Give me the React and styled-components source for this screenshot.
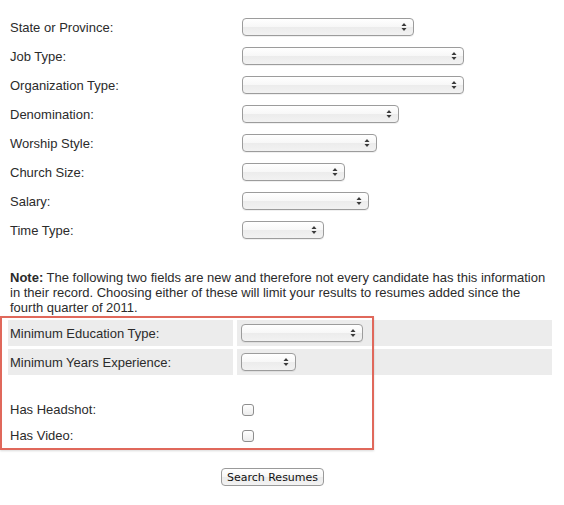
import styled, { createGlobalStyle } from "styled-components";

const GlobalStyle = createGlobalStyle`
    body{
        margin: 0;
        background: #ffffff;
        font-family: "Liberation Sans", Arial, Helvetica, sans-serif;
        font-size: 13px;
        color: #2b2b2b;
    }
`

const topFields = [
    { label: "State or Province:", width: 172 },
    { label: "Job Type:", width: 222 },
    { label: "Organization Type:", width: 222 },
    { label: "Denomination:", width: 157 },
    { label: "Worship Style:", width: 135 },
    { label: "Church Size:", width: 103 },
    { label: "Salary:", width: 127 },
    { label: "Time Type:", width: 82 },
]

function Select({ width }) {
    return (
        <SelectBox $width={width}>
            <Arrows width="6" height="10" viewBox="0 0 6 10">
                <path d="M3 1 L5.5 4 L0.5 4 Z" fill="#3a3a3a" />
                <path d="M3 9 L5.5 6 L0.5 6 Z" fill="#3a3a3a" />
            </Arrows>
        </SelectBox>
    )
}

export default function App() {
    return (
        <Page>
            <GlobalStyle />
            <Rows>
                {topFields.map((f) => (
                    <Row key={f.label}>
                        <Label>{f.label}</Label>
                        <Field>
                            <Select width={f.width} />
                        </Field>
                    </Row>
                ))}
            </Rows>

            <Note>
                <b>Note:</b> The following two fields are new and therefore not every candidate has this information
                <br />
                in their record. Choosing either of these will limit your results to resumes added since the
                <br />
                fourth quarter of 2011.
            </Note>

            <Lower>
                <Rows>
                    <Row $shade>
                        <Label $shade>Minimum Education Type:</Label>
                        <Field $shade>
                            <Select width={122} />
                        </Field>
                    </Row>
                    <Row $shade>
                        <Label $shade>Minimum Years Experience:</Label>
                        <Field $shade>
                            <Select width={55} />
                        </Field>
                    </Row>
                    <Row $h={17} />
                    <Row $h={23}>
                        <Label>Has Headshot:</Label>
                        <Field>
                            <Check />
                        </Field>
                    </Row>
                    <Row $h={23}>
                        <Label>Has Video:</Label>
                        <Field>
                            <Check />
                        </Field>
                    </Row>
                </Rows>
                <Highlight />
            </Lower>

            <SearchButton>Search Resumes</SearchButton>
        </Page>
    )
}

const Page = styled.div`
    padding-top: 14px;
    padding-bottom: 16px;
`

const Rows = styled.div`
    display: flex;
    flex-direction: column;
    gap: 3px;
`

const Row = styled.div`
    display: grid;
    grid-template-columns: 225px 315px;
    column-gap: 4px;
    margin-left: 8px;
    height: ${(p) => p.$h || 26}px;
`

const Label = styled.div`
    display: flex;
    align-items: center;
    padding-left: 2px;
    white-space: nowrap;
    background: ${(p) => (p.$shade ? "#ececec" : "transparent")};
`

const Field = styled.div`
    display: flex;
    align-items: center;
    padding-left: ${(p) => (p.$shade ? 4 : 5)}px;
    background: ${(p) => (p.$shade ? "#ececec" : "transparent")};
`

const SelectBox = styled.div`
    position: relative;
    box-sizing: border-box;
    width: ${(p) => p.$width}px;
    height: 18px;
    border: 1px solid #9c9c9c;
    border-radius: 4px;
    background: linear-gradient(#ffffff 0%, #f7f7f7 50%, #ececec 52%, #f2f2f2 100%);
    box-shadow: 0 1px 0 rgba(0, 0, 0, 0.06);
`

const Arrows = styled.svg`
    position: absolute;
    right: 6px;
    top: 3px;
`

const Check = styled.div`
    box-sizing: border-box;
    width: 12px;
    height: 12px;
    border: 1px solid #8e8e8e;
    border-radius: 3px;
    background: linear-gradient(#ffffff, #ececec);
`

const Note = styled.p`
    margin: 27px 0 5px 10px;
    line-height: 15px;
    white-space: nowrap;
    color: #2b2b2b;
    b{
        font-weight: bold;
    }
`

const Lower = styled.div`
    position: relative;
`

const Highlight = styled.div`
    position: absolute;
    left: 0;
    top: -4px;
    width: 374px;
    height: 134px;
    box-sizing: border-box;
    border: 2px solid #e0685b;
    box-shadow: 0 1px 2px rgba(0, 0, 0, 0.15);
    pointer-events: none;
`

const SearchButton = styled.button`
    display: block;
    margin: 21px 0 0 221px;
    width: 103px;
    height: 18px;
    padding: 0;
    border: 1px solid #9a9a9a;
    border-radius: 4px;
    background: linear-gradient(#ffffff 0%, #f6f6f6 50%, #ebebeb 52%, #f3f3f3 100%);
    font-family: "DejaVu Sans", Verdana, sans-serif;
    font-size: 11px;
    color: #111;
`
